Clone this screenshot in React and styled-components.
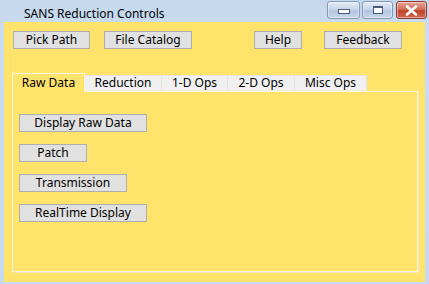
import React, { useState } from "react";
import styled, { createGlobalStyle } from "styled-components";

const GlobalStyle = createGlobalStyle`
  html, body {
    margin: 0;
    padding: 0;
    background: #c8dbef;
  }
  body {
    font-family: "Noto Sans", "Open Sans", sans-serif;
  }
`;

const tabs = ["Raw Data", "Reduction", "1-D Ops", "2-D Ops", "Misc Ops"];
const tabWidths = [73, 77, 66, 67, 72];

const App = () => {
  const [active, setActive] = useState(0);

  return (
    <Window>
      <GlobalStyle />
      <TitleBar>
        <Title>SANS Reduction Controls</Title>
        <Controls>
          <WinButton $w={33}>
            <MinGlyph />
          </WinButton>
          <WinButton $w={31}>
            <MaxGlyph />
          </WinButton>
          <WinButton $w={31} $close>
            <svg width="13" height="11" viewBox="0 0 13 11">
              <path
                d="M2 1.5 L11 9.5 M11 1.5 L2 9.5"
                stroke="#fff"
                strokeWidth="2.6"
                strokeLinecap="round"
              />
            </svg>
          </WinButton>
        </Controls>
      </TitleBar>
      <Client>
        <TopBar>
          <Group>
            <Button $w={77}>Pick Path</Button>
            <Button $w={88}>File Catalog</Button>
          </Group>
          <Group $gap={22}>
            <Button $w={48}>Help</Button>
            <Button $w={78}>Feedback</Button>
          </Group>
        </TopBar>
        <TabList>
          {tabs.map((t, i) => (
            <Tab
              key={t}
              $w={tabWidths[i]}
              $active={i === active}
              onClick={() => setActive(i)}
            >
              {t}
            </Tab>
          ))}
        </TabList>
        <Panel>
          <Button $w={128}>Display Raw Data</Button>
          <Button $w={68}>Patch</Button>
          <Button $w={108}>Transmission</Button>
          <Button $w={128}>RealTime Display</Button>
        </Panel>
      </Client>
    </Window>
  );
};

export default App;

const Window = styled.div`
  width: 429px;
  height: 284px;
  box-sizing: border-box;
  display: flex;
  flex-direction: column;
  padding: 0 4px 2px 4px;
  background: linear-gradient(#c4d7ec, #c9dcf0 30px, #c6d9ee);
`;

const TitleBar = styled.div`
  height: 22px;
  display: flex;
  align-items: flex-start;
`;

const Title = styled.div`
  margin: 6px 0 0 20px;
  font-size: 12px;
  line-height: 15px;
  color: #000;
`;

const Controls = styled.div`
  margin-left: auto;
  display: flex;
  gap: 2px;
  margin-top: 1px;
  margin-right: -2px;
`;

const WinButton = styled.div`
  width: ${(p) => p.$w}px;
  height: 18px;
  box-sizing: border-box;
  border: 1px solid ${(p) => (p.$close ? "#8a3a30" : "#8598b5")};
  border-radius: 3px;
  display: flex;
  align-items: center;
  justify-content: center;
  margin-left: ${(p) => (p.$close ? "1px" : "0")};
  background: ${(p) =>
    p.$close
      ? "linear-gradient(#e8a593, #d2705a 45%, #c0432b 55%, #d2684e)"
      : "linear-gradient(#e3ecf7, #c7d6ea 45%, #b2c5df 55%, #c6d6ec)"};
  box-shadow: inset 0 0 0 1px rgba(255, 255, 255, 0.45);
`;

const MinGlyph = styled.div`
  width: 10px;
  height: 3px;
  margin-top: 3px;
  background: #fff;
  border: 1px solid #4a5a78;
`;

const MaxGlyph = styled.div`
  width: 8px;
  height: 5px;
  border: 1px solid #4a5a78;
  border-top-width: 2px;
  background: #fff;
  box-shadow: inset 0 0 0 1px #fff;
`;

const Client = styled.div`
  flex: 1;
  background: #ffe36b;
  display: flex;
  flex-direction: column;
  padding: 9px 23px 10px 8px;
`;

const TopBar = styled.div`
  display: flex;
  justify-content: space-between;
  padding-left: 1px;
`;

const Group = styled.div`
  display: flex;
  gap: ${(p) => p.$gap || 14}px;
`;

const Button = styled.div`
  width: ${(p) => p.$w}px;
  height: 18px;
  box-sizing: border-box;
  border: 1px solid #adadad;
  background: #e1e1e1;
  color: #000;
  font-size: 12px;
  line-height: 16px;
  text-align: center;
  cursor: default;
`;

const TabList = styled.div`
  display: flex;
  align-items: flex-end;
  margin-top: 24px;
  height: 18px;
  position: relative;
  z-index: 1;
`;

const Tab = styled.div`
  width: ${(p) => p.$w}px;
  box-sizing: border-box;
  height: ${(p) => (p.$active ? 19 : 16)}px;
  margin-bottom: ${(p) => (p.$active ? -1 : 0)}px;
  padding-top: ${(p) => (p.$active ? 2 : 0)}px;
  border: 1px solid ${(p) => (p.$active ? "#fbf6e2" : "#e3e3e3")};
  border-bottom: ${(p) => (p.$active ? "none" : "1px solid #f4efd8")};
  border-left-width: ${(p) => (p.$active ? 1 : 0)}px;
  background: ${(p) => (p.$active ? "#ffe36b" : "#f0f0f0")};
  font-size: 12px;
  line-height: 14px;
  text-align: center;
  color: #000;
  cursor: default;
`;

const Panel = styled.div`
  flex: 1;
  margin-right: -16px;
  border: 1px solid #faf5e0;
  box-shadow: 1px 1px 0 #efe6c0;
  display: flex;
  flex-direction: column;
  align-items: flex-start;
  gap: 12px;
  padding: 22px 6px 0 6px;
`;
